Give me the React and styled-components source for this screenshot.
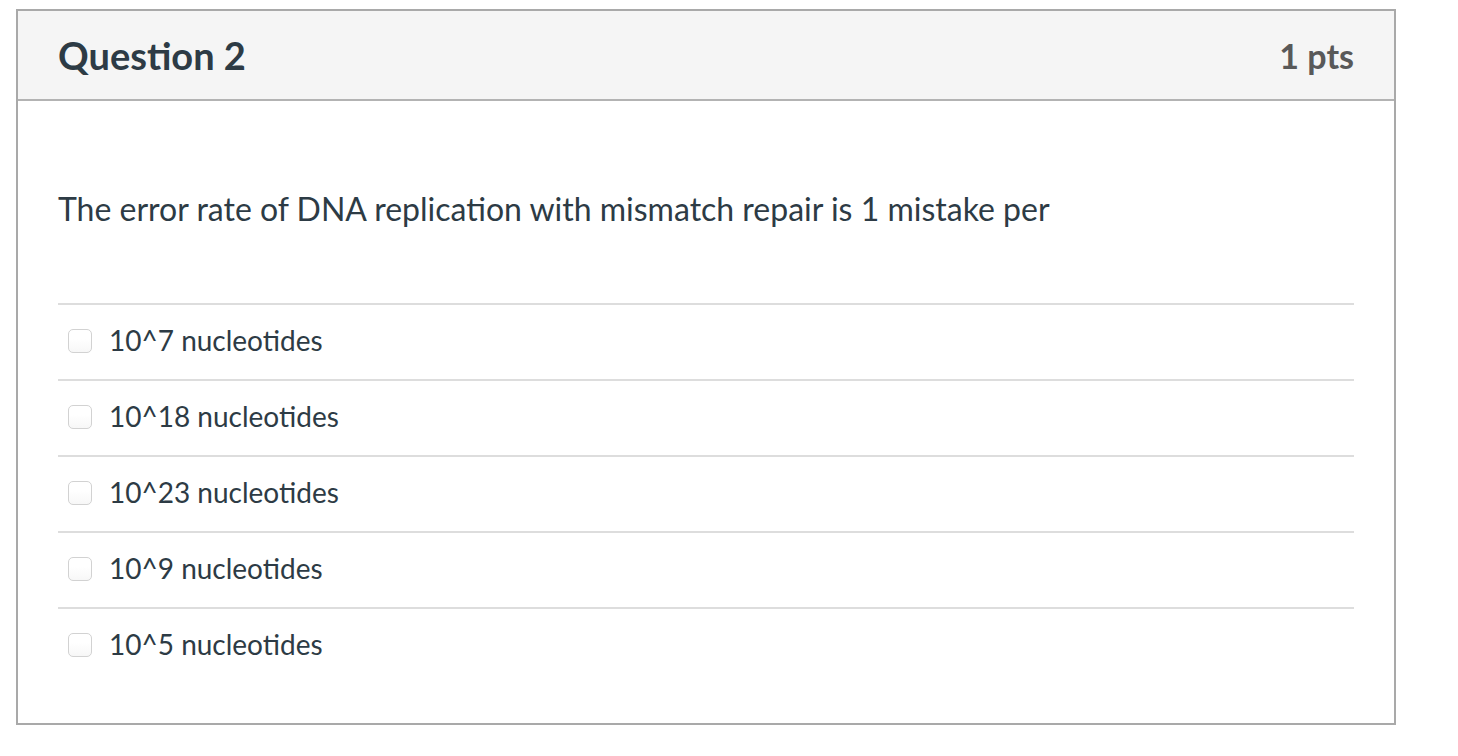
import React from "react";
import styled, { createGlobalStyle } from "styled-components";

const GlobalStyle = createGlobalStyle`
  html, body {
    margin: 0;
    padding: 0;
    background: #fff;
    font-family: Lato, "Liberation Sans", sans-serif;
    color: #2d3b45;
  }
`;

const Page = styled.div`
  padding: 9px 62px 0 16px;
`;

const Card = styled.div`
  width: 1376px;
  border: 2px solid #a9a9a9;
  background: #fff;
`;

const Header = styled.div`
  display: flex;
  align-items: center;
  justify-content: space-between;
  height: 88px;
  padding: 0 40px 0 40px;
  background: #f5f5f5;
  border-bottom: 2px solid #b3b3b3;
`;

const Title = styled.h2`
  margin: 0;
  font-size: 38px;
  font-weight: 700;
  color: #2d3b45;
`;

const Points = styled.div`
  font-size: 34px;
  font-weight: 700;
  color: #595959;
`;

const Body = styled.div`
  padding: 88px 40px 40px 40px;
`;

const QuestionText = styled.p`
  margin: 0 0 74px 0;
  font-size: 32px;
  line-height: 40px;
`;

const AnswerList = styled.div`
  display: flex;
  flex-direction: column;
`;

const Answer = styled.label`
  display: flex;
  align-items: center;
  gap: 17px;
  box-sizing: border-box;
  height: 76px;
  padding: 0 0 4px 10px;
  border-top: 2px solid #dddddd;
  font-size: 28px;
  color: #2d3b45;
`;

const Box = styled.span`
  box-sizing: border-box;
  width: 24px;
  height: 24px;
  margin-top: 2px;
  border: 1px solid #d2d2d2;
  border-radius: 5px;
  background: linear-gradient(#ffffff 40%, #f7f7f7);
  flex-shrink: 0;
`;

const answers = [
  "10^7 nucleotides",
  "10^18 nucleotides",
  "10^23 nucleotides",
  "10^9 nucleotides",
  "10^5 nucleotides",
];

export default function App() {
  return (
    <Page>
      <GlobalStyle />
      <Card>
        <Header>
          <Title>Question 2</Title>
          <Points>1 pts</Points>
        </Header>
        <Body>
          <QuestionText>
            The error rate of DNA replication with mismatch repair is 1 mistake per
          </QuestionText>
          <AnswerList>
            {answers.map((a) => (
              <Answer key={a}>
                <Box />
                {a}
              </Answer>
            ))}
          </AnswerList>
        </Body>
      </Card>
    </Page>
  );
}
